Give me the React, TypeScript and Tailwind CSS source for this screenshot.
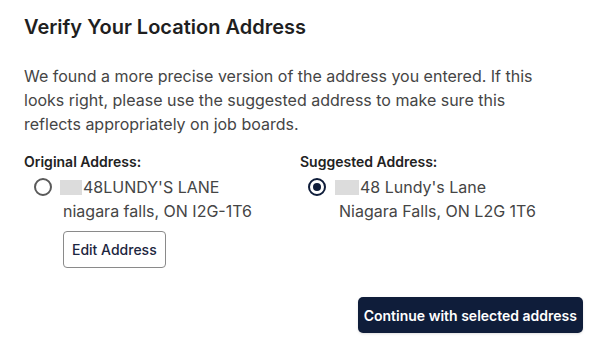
export default function App() {
  const font = { fontFamily: "Inter, 'Noto Sans', sans-serif" };
  return (
    <div className="min-h-screen w-[599px] bg-white text-[#222]" style={font}>
      <div className="px-6 pt-[13px]">
        <h1 className="text-[20px] leading-[28px] font-semibold text-[#1f1f1f]">
          Verify Your Location Address
        </h1>
        <p className="mt-[23px] max-w-[530px] text-[16px] leading-[24px] text-[#454545]">
          We found a more precise version of the address you entered. If this looks right, please use the suggested address to make sure this reflects appropriately on job boards.
        </p>

        <div className="mt-[17px] grid grid-cols-[276px_1fr]">
          {/* Original */}
          <div>
            <div className="text-[14px] leading-[18px] font-semibold text-[#222]">Original Address:</div>
            <div className="mt-[4px] flex pl-[10px]">
              <span className="mt-[3px] h-[18px] w-[18px] rounded-full border-2 border-[#5a5a5a] bg-white" />
              <div className="ml-[8px] text-[16px] leading-[24px] text-[#454545]">
                <div className="flex items-center">
                  <span className="mr-[1px] h-[15px] w-[22px] bg-[#dcdcdc]" />
                  48LUNDY'S LANE
                </div>
                <div className="pl-[3px]">niagara falls, ON I2G-1T6</div>
                <button className="mt-[8px] ml-[3px] h-[37px] rounded-[4px] border border-[#8a8a8a] px-[8px] text-[14px] font-medium text-[#1c2640]">
                  Edit Address
                </button>
              </div>
            </div>
          </div>

          {/* Suggested */}
          <div>
            <div className="text-[14px] leading-[18px] font-semibold text-[#222]">Suggested Address:</div>
            <div className="mt-[4px] flex pl-[8px]">
              <span className="mt-[3px] flex h-[18px] w-[18px] items-center justify-center rounded-full border-2 border-[#0f1d3a] bg-white">
                <span className="h-[8px] w-[8px] rounded-full bg-[#0f1d3a]" />
              </span>
              <div className="ml-[9px] text-[16px] leading-[24px] text-[#454545]">
                <div className="flex items-center">
                  <span className="mr-[1px] h-[15px] w-[24px] bg-[#dcdcdc]" />
                  48 Lundy's Lane
                </div>
                <div className="pl-[4px]">Niagara Falls, ON L2G 1T6</div>
              </div>
            </div>
          </div>
        </div>
      </div>

      <div className="mt-[29px] flex justify-end pr-[16px]">
        <button className="h-[36px] rounded-[5px] bg-[#0f1d3a] px-[6px] text-[14px] font-semibold text-white shadow-sm">
          Continue with selected address
        </button>
      </div>
    </div>
  );
}
